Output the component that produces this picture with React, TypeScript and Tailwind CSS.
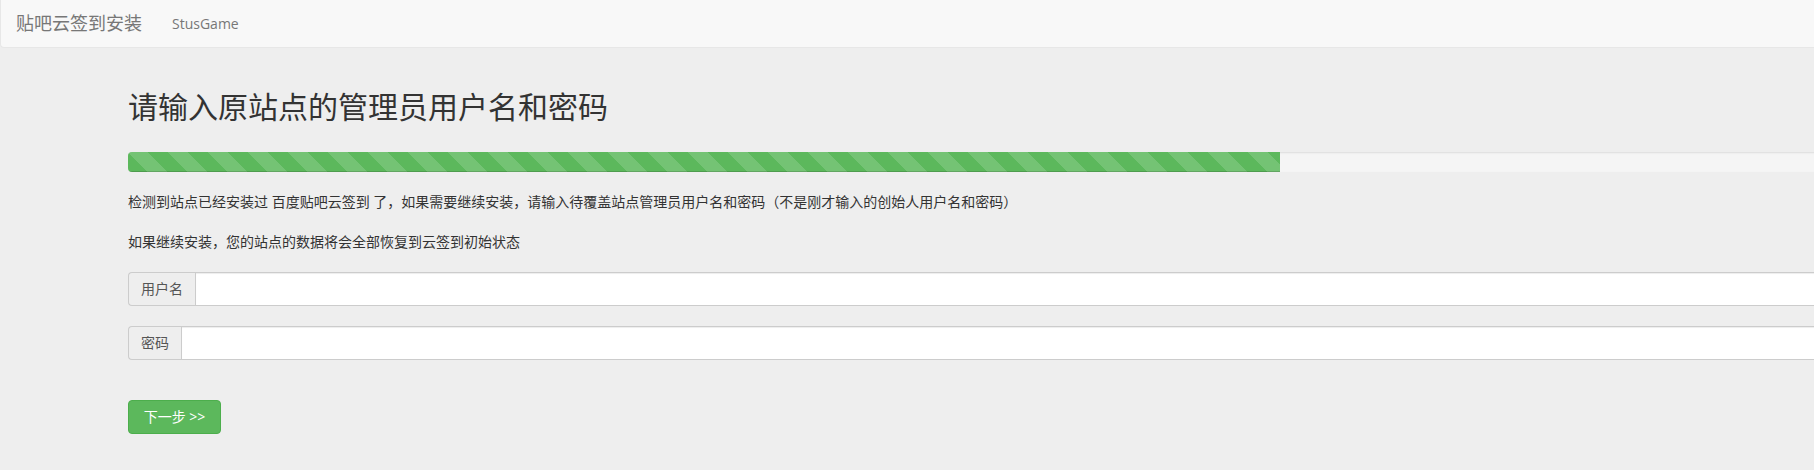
import { FC } from "react";

const fontStack = "font-['Open_Sans','Noto_Sans_CJK_SC',sans-serif]";

const InputGroup: FC<{ label: string; type?: string }> = ({ label, type = "text" }) => {
  return (
    <div className="flex h-[34px] w-full">
      <span className="flex items-center px-3 text-sm text-[#555] bg-[#eee] border border-[#ccc] border-r-0 rounded-l">
        {label}
      </span>
      <input
        type={type}
        className="flex-1 h-full px-3 text-sm bg-white border border-[#ccc] shadow-[inset_0_1px_1px_rgba(0,0,0,0.075)] outline-none"
      />
    </div>
  );
};

export default function App() {
  return (
    <div className={`w-full h-[470px] overflow-hidden bg-[#eeeeee] text-[#333] ${fontStack}`}>
      <nav className="flex items-center h-[48px] w-[1830px] bg-[#f8f8f8] border-l border-b border-[#e7e7e7] rounded-bl">
        <a className="px-[15px] text-[18px] text-[#777]">贴吧云签到安装</a>
        <a className="px-[15px] text-sm text-[#777]">StusGame</a>
      </nav>

      <div className="flex flex-col w-[1800px] ml-[128px]">
        <h2 className="mt-[42px] text-[30px] leading-[33px] font-normal">请输入原站点的管理员用户名和密码</h2>

        <div className="mt-[29px] h-5 w-full bg-[#f5f5f5] rounded shadow-[inset_0_1px_2px_rgba(0,0,0,0.1)] overflow-hidden">
          <div className="h-full w-[1152px] bg-[#5cb85c] bg-[linear-gradient(45deg,rgba(255,255,255,.15)_25%,transparent_25%,transparent_50%,rgba(255,255,255,.15)_50%,rgba(255,255,255,.15)_75%,transparent_75%,transparent)] bg-[length:40px_40px] shadow-[inset_0_-1px_0_rgba(0,0,0,0.15)]" />
        </div>

        <p className="mt-5 text-sm leading-5">
          检测到站点已经安装过 百度贴吧云签到 了，如果需要继续安装，请输入待覆盖站点管理员用户名和密码（不是刚才输入的创始人用户名和密码）
        </p>
        <p className="mt-5 text-sm leading-5">如果继续安装，您的站点的数据将会全部恢复到云签到初始状态</p>

        <div className="mt-5">
          <InputGroup label="用户名" />
        </div>
        <div className="mt-5">
          <InputGroup label="密码" type="password" />
        </div>

        <div className="mt-10">
          <button
            type="button"
            className="h-[34px] w-[93px] text-sm text-white bg-[#5cb85c] border border-[#4cae4c] rounded"
          >
            下一步 &gt;&gt;
          </button>
        </div>
      </div>
    </div>
  );
}
